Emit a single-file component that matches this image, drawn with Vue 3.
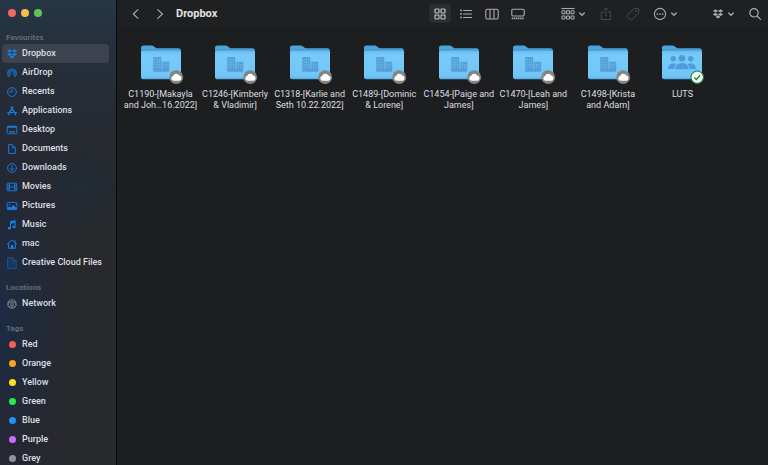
<script setup>
import { ref } from 'vue'

const selected = ref('Dropbox')
const view = ref('grid')

const favourites = [
  { name: 'Dropbox', icon: 'dropbox' },
  { name: 'AirDrop', icon: 'airdrop' },
  { name: 'Recents', icon: 'clock' },
  { name: 'Applications', icon: 'apps' },
  { name: 'Desktop', icon: 'desktop' },
  { name: 'Documents', icon: 'document' },
  { name: 'Downloads', icon: 'download' },
  { name: 'Movies', icon: 'film' },
  { name: 'Pictures', icon: 'picture' },
  { name: 'Music', icon: 'music' },
  { name: 'mac', icon: 'home' },
  { name: 'Creative Cloud Files', icon: 'file' }
]
const tags = [
  { name: 'Red', color: '#ff5b55' },
  { name: 'Orange', color: '#fda319' },
  { name: 'Yellow', color: '#ffe020' },
  { name: 'Green', color: '#2be94b' },
  { name: 'Blue', color: '#1b93fb' },
  { name: 'Purple', color: '#cc6bfa' },
  { name: 'Grey', color: '#92929b' }
]
const views = [
  { id: 'grid', label: 'Icon view' },
  { id: 'list', label: 'List view' },
  { id: 'columns', label: 'Column view' },
  { id: 'gallery', label: 'Gallery view' }
]
const folders = [
  { lines: ['C1190-[Makayla', 'and Joh…16.2022]'] },
  { lines: ['C1246-[Kimberly', '& Vladimir]'] },
  { lines: ['C1318-[Karlie and', 'Seth 10.22.2022]'] },
  { lines: ['C1489-[Dominic', '& Lorene]'] },
  { lines: ['C1454-[Paige and', 'James]'] },
  { lines: ['C1470-[Leah and', 'James]'] },
  { lines: ['C1498-[Krista', 'and Adam]'] },
  { lines: ['LUTS'], shared: true }
]
</script>

<template>
  <svg class="defs" aria-hidden="true">
    <defs>
      <linearGradient id="front" x1="0" y1="0" x2="0" y2="1">
        <stop offset="0" stop-color="#6abbf0" />
        <stop offset="0.15" stop-color="#77cbfa" />
        <stop offset="0.9" stop-color="#72c6f7" />
        <stop offset="1" stop-color="#55a9df" />
      </linearGradient>
      <symbol id="i-dropbox" viewBox="0 0 12 12">
        <path fill="currentColor" d="M3.500 1.200 6.100 2.900 3.500 4.600.8 2.900zM8.500 1.200l2.700 1.700-2.700 1.700-2.600-1.700zM3.500 4.700 6.100 6.400 3.500 8.100.8 6.400zM8.500 4.700l2.700 1.700-2.700 1.700-2.600-1.700zM6 7.300l2.500 1.600L6 10.600 3.500 8.900z" />
      </symbol>
      <symbol id="i-airdrop" viewBox="0 0 12 12">
        <path fill="currentColor" opacity=".75" d="M2.900 10.400A5 5 0 1 1 9.100 10.400L6.800 7A1.200 1.200 0 1 0 5.200 7z" />
        <g fill="none" stroke="#20304a" stroke-width=".4">
          <path d="M3.300 9.200a3.700 3.700 0 1 1 5.400 0M4.300 8a2.300 2.300 0 1 1 3.400 0" />
        </g>
      </symbol>
      <symbol id="i-clock" viewBox="0 0 12 12">
        <g fill="none" stroke="currentColor" stroke-width=".9" stroke-linecap="round">
          <circle cx="6" cy="6" r="4.400" /><path d="M6 3v3.200H3.700" />
        </g>
      </symbol>
      <symbol id="i-apps" viewBox="0 0 12 12">
        <g fill="none" stroke="currentColor" stroke-width="1.400" stroke-linecap="round">
          <path d="M5.300 2.100 8.900 8.300M6.700 2.100 3.700 7.300M1.700 7.600h4.700M8.400 7.600h1.900M2.900 9l-.4.7M9.200 9l.4.7" />
        </g>
      </symbol>
      <symbol id="i-desktop" viewBox="0 0 12 12">
        <rect x="1.200" y="2.200" width="9.600" height="7.600" rx="1" fill="none" stroke="currentColor" stroke-width=".9" />
        <path fill="currentColor" d="M1.200 2.200h9.600v1.500H1.200zM3 7.200h6v1.300H3z" />
      </symbol>
      <symbol id="i-document" viewBox="0 0 12 12">
        <path fill="none" stroke="currentColor" stroke-width=".95" stroke-linejoin="round" d="M2.600 1.600h3.600l3.200 3.200v5.600H2.600zM6.200 1.800v3h3" />
      </symbol>
      <symbol id="i-download" viewBox="0 0 12 12">
        <g fill="none" stroke="currentColor" stroke-width=".9" stroke-linecap="round" stroke-linejoin="round">
          <circle cx="6" cy="6" r="4.400" /><path d="M6 3.400v5M4.200 6.600 6 8.500l1.800-1.900" />
        </g>
      </symbol>
      <symbol id="i-film" viewBox="0 0 12 12">
        <rect x="1.200" y="2.200" width="9.600" height="7.600" rx=".9" fill="none" stroke="currentColor" stroke-width=".9" />
        <path fill="none" stroke="currentColor" stroke-width=".9" d="M3.500 2.200v7.600M8.500 2.200v7.600M3.500 6h5M1.200 4.100h2.300M1.200 6h2.300M1.200 7.900h2.300M8.500 4.100h2.300M8.500 6h2.300M8.500 7.900h2.300" />
      </symbol>
      <symbol id="i-picture" viewBox="0 0 12 12">
        <rect x="1.200" y="2.400" width="9.600" height="7.200" rx=".8" fill="none" stroke="currentColor" stroke-width=".9" />
        <circle cx="3.600" cy="4.700" r=".8" fill="currentColor" />
        <path fill="currentColor" d="M1.400 9.200V8l2-1.600 1.300 1L7.400 5l3.200 3v1.200z" />
      </symbol>
      <symbol id="i-music" viewBox="0 0 12 12">
        <path fill="currentColor" d="M4 2.300 9.600 1v6.900a1.600 1.300 0 1 1-1-1.200V4L5 4.800v4.400a1.600 1.300 0 1 1-1-1.200z" />
      </symbol>
      <symbol id="i-home" viewBox="0 0 12 12">
        <g fill="none" stroke="currentColor" stroke-width="1" stroke-linecap="round" stroke-linejoin="round">
          <path d="M1.300 6.200 6 1.900l4.700 4.300M2.600 5.300v5h6.800v-5M9 2.500v1.600" />
        </g>
        <path fill="currentColor" d="M4.800 10.300V7h2.400v3.300z" />
      </symbol>
      <symbol id="i-file" viewBox="0 0 12 12">
        <path fill="#17375f" stroke="#1b5a9e" stroke-width=".8" d="M1.600.4h5l3.600 3.600v7.600H1.600zM6.600.5V4h3.500" />
      </symbol>
      <symbol id="i-globe" viewBox="0 0 12 12">
        <g fill="none" stroke="currentColor" stroke-width=".7">
          <circle cx="6" cy="6" r="4.400" /><circle cx="6" cy="6" r="1.300" />
          <path d="M6 1.600v3M6 7.300v3.100M2 4l2.800 1.300M10 4 7.200 5.300M2.800 9l2.300-2.100M9.200 9 6.900 6.900M3 3.200q3 1.800 6 0M2 8q.9-2 .6-4.600M10 8q-.9-2-.6-4.600M3.400 9.400q2.600-1.300 5.200 0" />
        </g>
      </symbol>
      <symbol id="i-back" viewBox="0 0 12 12">
        <path fill="none" stroke="currentColor" stroke-width="1.100" stroke-linecap="round" stroke-linejoin="round" d="M8 1.600 3.300 6 8 10.400" />
      </symbol>
      <symbol id="i-forward" viewBox="0 0 12 12">
        <path fill="none" stroke="currentColor" stroke-width="1.100" stroke-linecap="round" stroke-linejoin="round" d="M3.700 1.600 8.400 6l-4.700 4.400" />
      </symbol>
      <symbol id="i-down" viewBox="0 0 8 8">
        <path fill="none" stroke="currentColor" stroke-width="1.300" stroke-linecap="round" stroke-linejoin="round" d="M1.700 3 4 5.300 6.300 3" />
      </symbol>
      <symbol id="i-grid" viewBox="0 0 14 14">
        <g fill="none" stroke="currentColor" stroke-width="1.200">
          <rect x="2" y="2" width="4" height="4" rx=".8" /><rect x="8" y="2" width="4" height="4" rx=".8" />
          <rect x="2" y="8" width="4" height="4" rx=".8" /><rect x="8" y="8" width="4" height="4" rx=".8" />
        </g>
      </symbol>
      <symbol id="i-list" viewBox="0 0 14 14">
        <path fill="none" stroke="currentColor" stroke-width="1" stroke-linecap="round" d="M4.500 3.500h8M4.500 7h8M4.500 10.500h8" />
        <g fill="currentColor"><circle cx="2" cy="3.500" r=".9" /><circle cx="2" cy="7" r=".9" /><circle cx="2" cy="10.500" r=".9" /></g>
      </symbol>
      <symbol id="i-columns" viewBox="0 0 14 14">
        <g fill="none" stroke="currentColor" stroke-width="1.100">
          <rect x=".8" y="2.200" width="12.400" height="9.800" rx="1.400" /><path d="M5 2.200V12M9 2.200V12" />
        </g>
      </symbol>
      <symbol id="i-gallery" viewBox="0 0 14 14">
        <rect x=".8" y="2.200" width="12.400" height="6.800" rx="1.200" fill="none" stroke="currentColor" stroke-width="1.100" />
        <path fill="none" stroke="currentColor" stroke-width="1.700" stroke-dasharray="1.500 .6" d="M.7 11.300h12.600" />
      </symbol>
      <symbol id="i-group" viewBox="0 0 14 14">
        <g fill="none" stroke="currentColor" stroke-width="1.100">
          <path d="M.5 1.500h13" />
          <rect x="1" y="3.800" width="3" height="3" rx=".6" /><rect x="5.500" y="3.800" width="3" height="3" rx=".6" /><rect x="10" y="3.800" width="3" height="3" rx=".6" />
          <rect x="1" y="9" width="3" height="3" rx=".6" /><rect x="5.500" y="9" width="3" height="3" rx=".6" /><rect x="10" y="9" width="3" height="3" rx=".6" />
        </g>
      </symbol>
      <symbol id="i-share" viewBox="0 0 14 14">
        <path fill="none" stroke="currentColor" stroke-width="1" stroke-linecap="round" stroke-linejoin="round" d="M4.800 5H2.300v7.500h9.400V5H9.200M7 8.600V1.200M4.900 3 7 1l2.100 2" />
      </symbol>
      <symbol id="i-tag" viewBox="0 0 14 14">
        <path fill="none" stroke="currentColor" stroke-width="1" stroke-linejoin="round" d="M1.300 8.200 7.700 1.800l4.200-.5q.9 0 .9.900L12.300 6 5.900 12.600q-.8.600-1.500 0L1.300 9.600q-.6-.7 0-1.400z" />
        <circle cx="10.200" cy="3.900" r=".8" fill="currentColor" />
      </symbol>
      <symbol id="i-more" viewBox="0 0 14 14">
        <circle cx="7" cy="7" r="5.600" fill="none" stroke="currentColor" stroke-width="1.100" />
        <g fill="currentColor"><circle cx="4.400" cy="7" r=".85" /><circle cx="7" cy="7" r=".85" /><circle cx="9.600" cy="7" r=".85" /></g>
      </symbol>
      <symbol id="i-search" viewBox="0 0 14 14">
        <g fill="none" stroke="currentColor" stroke-width="1.200" stroke-linecap="round"><circle cx="6" cy="5.800" r="4.200" /><path d="m9.200 9 3.300 3.300" /></g>
      </symbol>
    </defs>
  </svg>

  <div class="window">
    <aside class="sidebar">
      <div class="lights">
        <button class="light close" aria-label="Close"></button>
        <button class="light minimise" aria-label="Minimise"></button>
        <button class="light zoom" aria-label="Zoom"></button>
      </div>
      <nav>
        <h2>Favourites</h2>
        <button
          v-for="item in favourites"
          :key="item.name"
          class="item"
          :class="{ active: selected === item.name }"
          @click="selected = item.name"
        >
          <svg class="icon"><use :href="'#i-' + item.icon" /></svg>{{ item.name }}
        </button>
        <h2 class="spaced">Locations</h2>
        <button class="item"><svg class="icon grey"><use href="#i-globe" /></svg>Network</button>
        <h2 class="spaced">Tags</h2>
        <button v-for="tag in tags" :key="tag.name" class="item">
          <span class="dot-box"><span class="dot" :style="{ background: tag.color }"></span></span>{{ tag.name }}
        </button>
      </nav>
    </aside>

    <main>
      <header class="toolbar">
        <button class="tool nav" aria-label="Back"><svg class="icon"><use href="#i-back" /></svg></button>
        <button class="tool nav" aria-label="Forward"><svg class="icon"><use href="#i-forward" /></svg></button>
        <h1>Dropbox</h1>
        <div class="views">
          <button
            v-for="v in views"
            :key="v.id"
            class="tool view"
            :class="{ active: view === v.id }"
            :aria-label="v.label"
            @click="view = v.id"
          >
            <svg class="large"><use :href="'#i-' + v.id" /></svg>
          </button>
        </div>
        <div class="actions">
          <button class="tool" aria-label="Group"><svg class="large"><use href="#i-group" /></svg><svg class="down"><use href="#i-down" /></svg></button>
          <button class="tool" aria-label="Share" disabled><svg class="large"><use href="#i-share" /></svg></button>
          <button class="tool" aria-label="Edit tags" disabled><svg class="large"><use href="#i-tag" /></svg></button>
          <button class="tool" aria-label="More"><svg class="large"><use href="#i-more" /></svg><svg class="down"><use href="#i-down" /></svg></button>
        </div>
        <div class="extras">
          <button class="tool" aria-label="Dropbox menu"><svg class="icon"><use href="#i-dropbox" /></svg><svg class="down"><use href="#i-down" /></svg></button>
          <button class="tool" aria-label="Search"><svg class="large"><use href="#i-search" /></svg></button>
        </div>
      </header>

      <section class="files">
        <button v-for="folder in folders" :key="folder.lines[0]" class="folder">
          <svg class="art" viewBox="0 0 46 42" aria-hidden="true">
            <path fill="#4da3dc" d="M3 4.500Q3 2.500 5.500 2.500h8q1.400 0 2.400.9l1.800 1.300q.9.600 2 .6h21.100Q43 5.300 43 7.800V20H3z" />
            <path fill="#3e8ecb" d="M3 6.800h40V12H3z" />
            <path fill="url(#front)" d="M3 9.200q0-1.600 1.600-1.600h36.800Q43 7.600 43 9.200v25q0 2-2 2H5q-2 0-2-2z" />
            <g v-if="folder.shared" fill="#4e9dda">
              <circle cx="14.300" cy="15.800" r="2.700" /><circle cx="31.700" cy="15.800" r="2.700" />
              <path d="M9 26q.4-5.600 5.200-5.800 2 0 3.100 1-2 1.900-2.200 4.800zM37 26q-.4-5.600-5.200-5.800-2 0-3.100 1 2 1.900 2.200 4.800z" />
              <circle cx="23" cy="15.200" r="3.300" /><path d="M16.200 26.200q.3-6 6.800-6.200 6.500.2 6.800 6.200z" />
            </g>
            <g v-else>
              <path fill="#579fdb" d="M15.200 14h8v4.700h8v10h-16z" />
              <path fill="none" stroke="#74c2f3" stroke-width=".9" stroke-dasharray="1.300 1.200" d="M17 15.800v9.500M19.200 15.800v9.500M21.400 15.800v9.500M26.500 20.800v5M28.900 20.800v5" />
              <path stroke="#74c5f5" stroke-width=".9" d="M24 18.500v7.500" />
            </g>
            <g v-if="folder.shared">
              <circle cx="38.200" cy="34.200" r="6.200" fill="#f6faf6" stroke="#258144" stroke-width="1.100" />
              <path fill="none" stroke="#258144" stroke-width="1.400" d="m35.200 34.400 2.200 2.100 3.800-4.300" />
            </g>
            <g v-else>
              <circle cx="38.200" cy="34.200" r="6.900" fill="#858481" />
              <path fill="#fff" d="M35.400 37.700a2.400 2.400 0 0 1-.3-4.700 3.400 3.400 0 0 1 6.200-.4 2.600 2.600 0 0 1 .3 5.100z" />
            </g>
          </svg>
          <span v-for="line in folder.lines" :key="line" class="line">{{ line }}</span>
        </button>
      </section>
    </main>
  </div>
</template>

<style>
body {
  margin: 0;
  background: #1d1e20;
}
</style>

<style scoped>
.defs {
  position: absolute;
  width: 0;
  height: 0;
}
.window {
  display: flex;
  height: 100vh;
  overflow: hidden;
  font-family: Roboto, "Liberation Sans", sans-serif;
  color: #dedfe1;
}
button {
  margin: 0;
  padding: 0;
  border: 0;
  background: none;
  color: inherit;
  font: inherit;
}
svg {
  display: block;
  flex: none;
}
.sidebar {
  box-sizing: border-box;
  flex: none;
  width: 117px;
  padding: 9px 7px 0 2px;
  overflow: hidden;
  border-right: 1px solid #08090a;
  background:
    radial-gradient(ellipse 70px 150px at 0 310px, #1c2c43, transparent),
    radial-gradient(ellipse 50px 50px at 80px 190px, #212b37, transparent),
    linear-gradient(180deg, #263746 0, #252f3c 50px, #25293300 180px),
    linear-gradient(90deg, #252733 0, #28292c 70%);
}
.lights {
  display: flex;
  gap: 5px;
  padding: 0 6px;
}
.light {
  width: 8px;
  height: 8px;
  margin-bottom: 1px;
  border-radius: 50%;
}
.close { background: #ed6a5f; }
.minimise { background: #f5bf4f; }
.zoom { background: #61c555; }
h2 {
  margin: 14px 0 0;
  padding-left: 4px;
  color: #626a75;
  font-size: 8px;
  font-weight: 700;
  line-height: 12px;
}
h2.spaced {
  margin-top: 10px;
}
.item {
  display: flex;
  align-items: center;
  gap: 4px;
  width: 100%;
  height: 19px;
  padding-left: 4px;
  border-radius: 4px;
  font-size: 9px;
  font-weight: 500;
  line-height: 19px;
  white-space: nowrap;
}
.item.active {
  background: #3c434f;
}
.icon {
  width: 12px;
  height: 12px;
}
.item .icon {
  color: #1680e8;
}
.item .grey {
  color: #85878b;
}
.dot-box {
  display: grid;
  place-items: center;
  width: 12px;
}
.dot {
  width: 7px;
  height: 7px;
  border-radius: 50%;
}
main {
  flex: 1;
  min-width: 0;
  background: #1d1e20;
}
.toolbar {
  display: flex;
  align-items: center;
  height: 27px;
  padding: 0 6px 0 13px;
  background: #1f2022;
  color: #a9aaac;
}
.tool {
  display: flex;
  align-items: center;
  gap: 3px;
}
.tool:disabled {
  color: #48494b;
}
.nav {
  margin-right: 12px;
}
h1 {
  margin: 0 auto 0 -2px;
  color: #e2e2e3;
  font-size: 11px;
  font-weight: 700;
  line-height: 19px;
}
.large {
  width: 14px;
  height: 14px;
}
.down {
  width: 8px;
  height: 8px;
}
.views {
  display: flex;
  gap: 4px;
  margin-right: 32px;
}
.view {
  justify-content: center;
  width: 22px;
  height: 19px;
  border-radius: 4px;
}
.view.active {
  background: #2c2d2f;
  color: #c2c3c4;
}
.actions {
  display: flex;
  gap: 13px;
  margin-right: 34px;
}
.extras {
  display: flex;
  align-items: center;
  gap: 13px;
}
.files {
  display: grid;
  grid-template-columns: repeat(auto-fill, 73px);
  justify-content: space-between;
  row-gap: 20px;
  padding: 16px 49px 0 7px;
}
.folder {
  display: flex;
  flex-direction: column;
  align-items: center;
  justify-content: flex-start;
  font-size: 9px;
  line-height: 11px;
}
.art {
  width: 46px;
  height: 42px;
  margin-bottom: 4px;
}
.line {
  white-space: nowrap;
}
</style>
